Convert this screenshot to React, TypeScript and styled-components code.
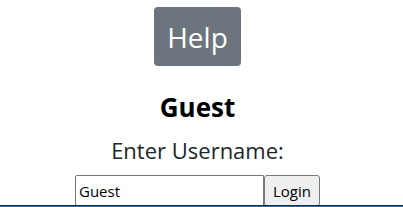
import React from "react";
import styled, { createGlobalStyle } from "styled-components";

const Global = createGlobalStyle`
  html, body { margin: 0; padding: 0; background: #fff; }
  body { font-family: "Open Sans", "Noto Sans", sans-serif; color: #000; overflow: hidden; }
`;

const Page = styled.div`
  width: 395px;
  height: 207px;
  display: flex;
  flex-direction: column;
  align-items: center;
  box-sizing: border-box;
  padding-top: 7px;
`;

const HelpButton = styled.button`
  width: 87px;
  height: 59px;
  background: #6c757d;
  color: #fff;
  border: none;
  border-radius: 4px;
  font-family: "Open Sans", sans-serif;
  font-size: 28px;
  padding: 0;
  cursor: pointer;
`;

const Title = styled.h2`
  margin: 25px 0 0;
  font-size: 26px;
  font-weight: 700;
  line-height: 32px;
  color: #000;
`;

const Label = styled.div`
  margin-top: 12px;
  font-size: 22px;
  line-height: 30px;
  color: #212529;
`;

const Row = styled.div`
  margin-top: 10px;
  display: flex;
`;

const Input = styled.input`
  box-sizing: border-box;
  width: 189px;
  height: 31px;
  border: 1px solid #767676;
  border-radius: 2px 0 0 2px;
  padding: 0 3px;
  font-family: "Open Sans", sans-serif;
  font-size: 15px;
  color: #000;
`;

const LoginButton = styled.button`
  box-sizing: border-box;
  width: 56px;
  height: 31px;
  border: 1px solid #767676;
  border-radius: 3px;
  background: #efefef;
  font-family: "Open Sans", sans-serif;
  font-size: 15px;
  padding: 0;
  color: #000;
`;

const BottomLine = styled.div`
  position: fixed;
  left: 0;
  right: 0;
  top: 205px;
  height: 1px;
  border-bottom: 1px solid #2b6aa8;
  background: #1a2c40;
`;

export default function App() {
  return (
    <>
      <Global />
      <Page>
        <HelpButton>Help</HelpButton>
        <Title>Guest</Title>
        <Label>Enter Username:</Label>
        <Row>
          <Input defaultValue="Guest" />
          <LoginButton>Login</LoginButton>
        </Row>
      </Page>
      <BottomLine />
    </>
  );
}
